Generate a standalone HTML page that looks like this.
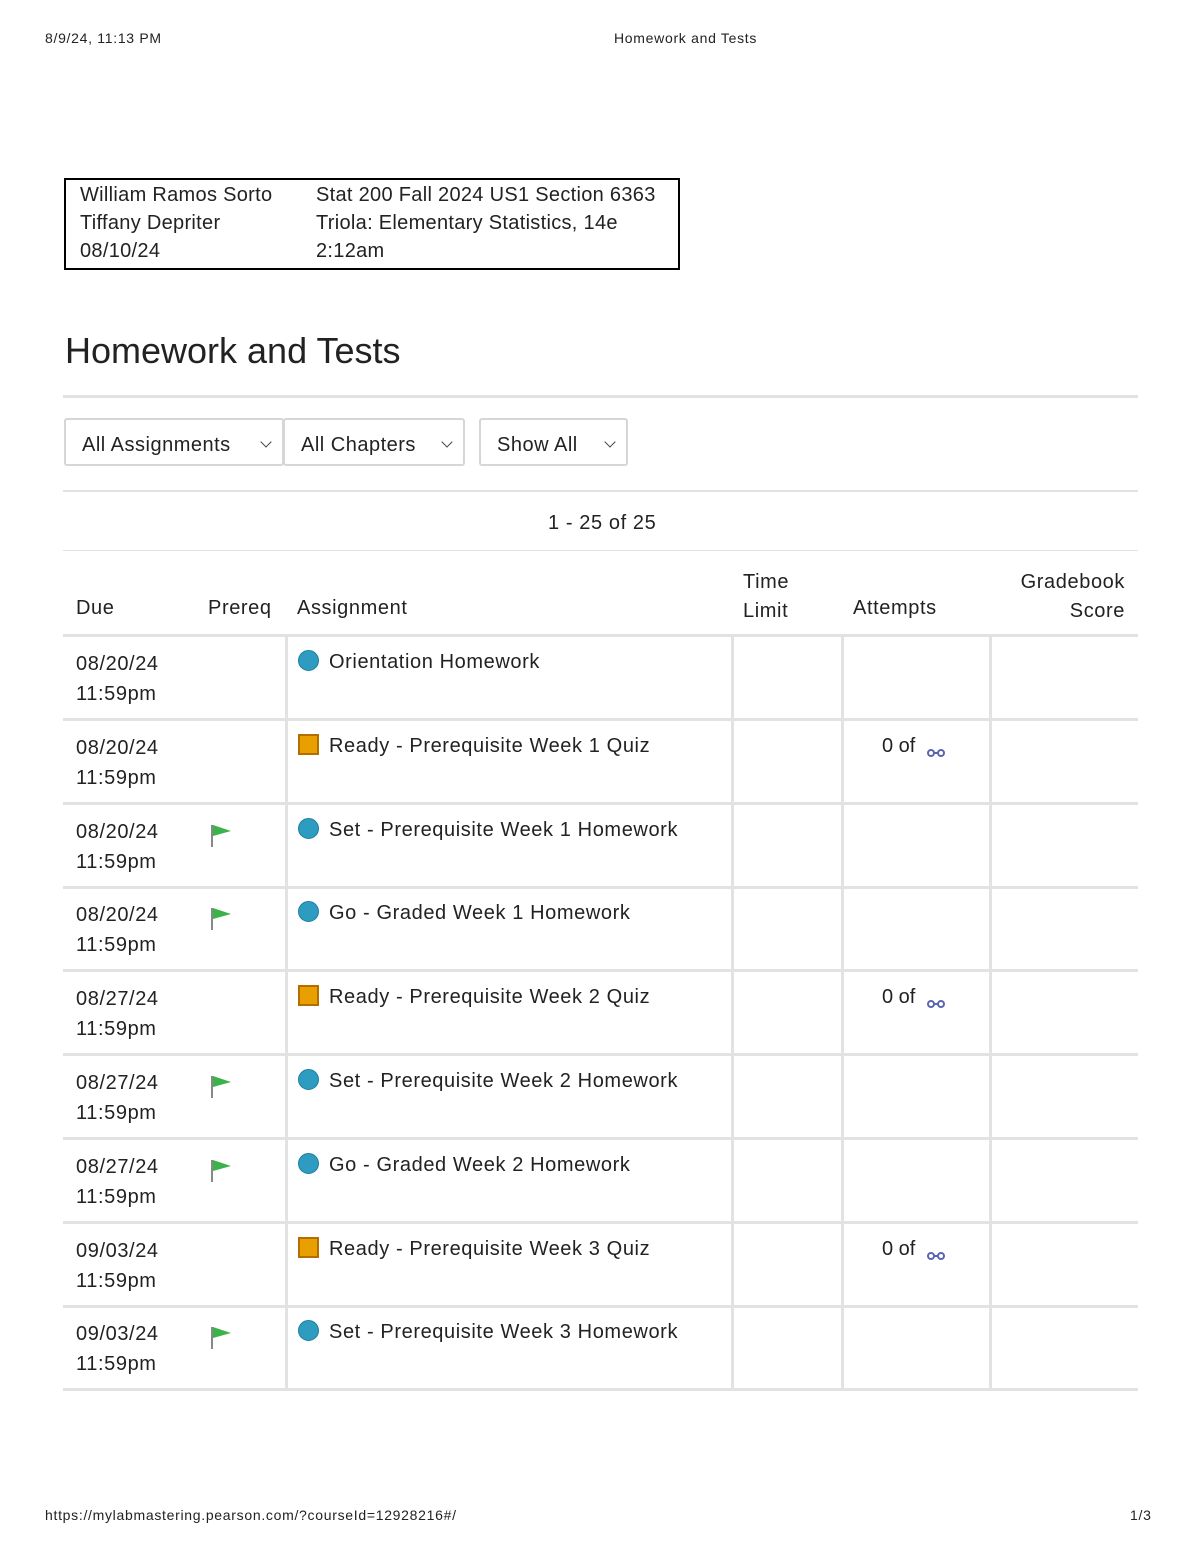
<!DOCTYPE html><html><head><style>
body{margin:0;width:1200px;height:1553px;background:#fff;font-family:"Liberation Sans",sans-serif;color:#222;position:relative;overflow:hidden}
.a{position:absolute;white-space:nowrap}
.hd{font-size:14px;color:#222;letter-spacing:.7px}
.box{position:absolute;left:64px;top:178px;width:612px;height:88px;border:2px solid #000;font-size:20px;line-height:28px;letter-spacing:.3px}
.sel{position:absolute;top:418px;height:48px;border:2px solid #d6d6d6;border-radius:3px;font-size:20px;line-height:48px;box-sizing:border-box;letter-spacing:.5px}
.sel span{position:absolute;left:16px;top:1px}
.sel i{position:absolute;right:12px;top:18px;width:7px;height:7px;border-right:1.5px solid #444;border-bottom:1.5px solid #444;transform:rotate(45deg)}
.hl{position:absolute;left:63px;width:1075px;background:#e2e2e2}
.vl{position:absolute;width:3px;background:#e2e2e2;top:636px;height:754px}
.t{font-size:20px;color:#222;letter-spacing:.6px}
.circ{position:absolute;width:21px;height:21px;border-radius:50%;background:#2e9cc0;border:1px solid #1d7fa0;box-sizing:border-box}
.sq{position:absolute;width:21px;height:21px;background:#e8a000;border:2px solid #b46e00;box-sizing:border-box}
</style></head><body>
<div class="a hd" style="left:45px;top:30px">8/9/24, 11:13 PM</div>
<div class="a hd" style="left:614px;top:30px">Homework and Tests</div>
<div class="a hd" style="left:45px;top:1507px">https://mylabmastering.pearson.com/?courseId=12928216#/</div>
<div class="a hd" style="left:1130px;top:1507px">1/3</div>
<div class="box"><div class="a" style="left:14px;top:1px">William Ramos Sorto<br>Tiffany Depriter<br>08/10/24</div><div class="a" style="left:250px;top:1px">Stat 200 Fall 2024 US1 Section 6363<br>Triola: Elementary Statistics, 14e<br>2:12am</div></div>
<div class="a" style="left:65px;top:330px;font-size:36px;color:#222">Homework and Tests</div>
<div class="hl" style="top:395px;height:3px"></div>
<div class="sel" style="left:64px;width:220px"><span>All Assignments</span><i></i></div>
<div class="sel" style="left:283px;width:182px"><span>All Chapters</span><i></i></div>
<div class="sel" style="left:479px;width:149px"><span>Show All</span><i></i></div>
<div class="hl" style="top:490px;height:2px"></div>
<div class="a t" style="left:548px;top:512px">1 - 25 of 25</div>
<div class="hl" style="top:550px;height:1px"></div>
<div class="a t" style="left:76px;top:597px">Due</div>
<div class="a t" style="left:208px;top:597px">Prereq</div>
<div class="a t" style="left:297px;top:597px">Assignment</div>
<div class="a t" style="left:743px;top:568px;line-height:29px">Time<br>Limit</div>
<div class="a t" style="left:853px;top:597px">Attempts</div>
<div class="a t" style="left:1000px;top:568px;line-height:29px;width:125px;text-align:right">Gradebook<br>Score</div>
<div class="hl" style="top:634px;height:3px"></div>
<div class="vl" style="left:285px"></div><div class="vl" style="left:731px"></div><div class="vl" style="left:841px"></div><div class="vl" style="left:989px"></div>
<div id="rows"></div>
<script>
var r=[["08/20/24",0,0,"Orientation Homework",0],["08/20/24",0,1,"Ready - Prerequisite Week 1 Quiz",1],["08/20/24",1,0,"Set - Prerequisite Week 1 Homework",0],["08/20/24",1,0,"Go - Graded Week 1 Homework",0],["08/27/24",0,1,"Ready - Prerequisite Week 2 Quiz",1],["08/27/24",1,0,"Set - Prerequisite Week 2 Homework",0],["08/27/24",1,0,"Go - Graded Week 2 Homework",0],["09/03/24",0,1,"Ready - Prerequisite Week 3 Quiz",1],["09/03/24",1,0,"Set - Prerequisite Week 3 Homework",0]];
var h="";r.forEach(function(x,i){var y=636+i*83.8;
h+='<div class="a t" style="left:76px;top:'+(y+13)+'px;line-height:30px">'+x[0]+'<br>11:59pm</div>';
if(x[1])h+='<svg class="a" style="left:210px;top:'+(y+186-186+186-186)+'px;display:none"></svg><svg class="a" style="left:210px;top:'+(y+186)+'px;display:none"></svg><svg class="a" style="left:210px;top:'+(y+186-186+0)+'px;display:none"></svg><svg class="a" style="left:210px;top:'+(y+186)+'px;display:none"></svg><svg class="a" style="left:210px;top:'+(y+186-186+186-186)+'px;display:none"></svg><svg class="a" style="left:210px;top:'+(y+186)+'px;display:none"></svg><svg class="a" style="left:210px;top:'+(y+186)+'px;display:none"></svg><svg class="a" style="left:210px;top:'+(y+186)+'px;display:none"></svg><svg class="a" style="left:210px;top:'+(y+186)+'px;display:none"></svg><svg class="a" style="left:210px;top:'+(y+20)+'px" width="24" height="24"><line x1="2" y1="1" x2="2" y2="23" stroke="#888" stroke-width="2"/><path d="M3 1 L21 7 L3 12 Z" fill="#3cb34a"/></svg>';
h+=(x[2]?'<div class="sq" style="left:298px;top:'+(y+98)+'px;display:none"></div><div class="sq" style="left:298px;top:'+(y+14)+'px"></div>':'<div class="circ" style="left:298px;top:'+(y+14)+'px"></div>');
h+='<div class="a t" style="left:329px;top:'+(y+15)+'px">'+x[3]+'</div>';
if(x[4])h+='<div class="a t" style="left:882px;top:'+(y+15)+'px;letter-spacing:0">0 of</div><svg class="a" style="left:926px;top:'+(y+28)+'px" width="20" height="10"><path d="M5 2a3 3 0 1 0 0 6 3 3 0 0 0 0-6zM15 2a3 3 0 1 0 0 6 3 3 0 0 0 0-6zM8 5h4" fill="none" stroke="#5b66b0" stroke-width="2"/></svg>';
h+='<div class="hl" style="top:'+(y+82)+'px;height:3px"></div>';});
document.getElementById("rows").innerHTML=h;
</script>
</body></html>
